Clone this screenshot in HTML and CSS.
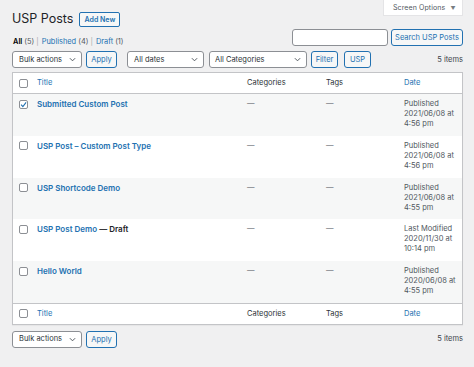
FILE: index.html
```html
<!DOCTYPE html>
<html lang="en">
<head>
  <meta charset="UTF-8">
  <title>USP Posts</title>
  <link rel="stylesheet" href="styles.css">
</head>
<body>

  <div class="wrap">
    <!-- SCREEN OPTIONS TAB -->
    <div class="screen-options">Screen Options <span class="tab-arrow">▼</span></div>

    <!-- PAGE HEADING -->
    <div class="heading">
      <h1>USP Posts</h1>
      <a class="page-action" href="#">Add New</a>
    </div>

    <div class="views-row">
      <ul class="views">
        <li><a class="current" href="#">All</a> <span class="count">(5)</span> |</li>
        <li><a href="#">Published</a> <span class="count">(4)</span> |</li>
        <li><a href="#">Draft</a> <span class="count">(1)</span></li>
      </ul>
      <div class="search-box">
        <input class="search-input" type="search">
        <button class="button">Search USP Posts</button>
      </div>
    </div>

    <!-- TOP TABLENAV -->
    <div class="tablenav">
      <div class="select bulk">Bulk actions <svg class="chevron" viewBox="0 0 8 5"><path d="M1 1l3 3 3-3" /></svg></div>
      <button class="button apply">Apply</button>
      <div class="select dates">All dates <svg class="chevron" viewBox="0 0 8 5"><path d="M1 1l3 3 3-3" /></svg></div>
      <div class="select cats">All Categories <svg class="chevron" viewBox="0 0 8 5"><path d="M1 1l3 3 3-3" /></svg></div>
      <button class="button filter">Filter</button>
      <button class="button usp">USP</button>
      <span class="items">5 items</span>
    </div>

    <!-- POSTS TABLE -->
    <table class="posts">
      <colgroup>
        <col class="col-cb">
        <col class="col-title">
        <col class="col-cats">
        <col class="col-tags">
        <col>
      </colgroup>
      <thead>
        <tr>
          <th class="cb"><span class="checkbox"></span></th>
          <th><a href="#">Title</a></th>
          <th>Categories</th>
          <th>Tags</th>
          <th><a href="#">Date</a></th>
        </tr>
      </thead>
      <tbody>
        <tr class="alt">
          <td class="cb"><span class="checkbox checked"><svg viewBox="0 0 10 10"><path d="M2.3 5.2l2 2.1 3.6-4.6" /></svg></span></td>
          <td><a class="row-title" href="#">Submitted Custom Post</a></td>
          <td class="dash">—</td>
          <td class="dash">—</td>
          <td class="date">Published<br>2021/06/08 at<br>4:56 pm</td>
        </tr>
        <tr>
          <td class="cb"><span class="checkbox"></span></td>
          <td><a class="row-title" href="#">USP Post – Custom Post Type</a></td>
          <td class="dash">—</td>
          <td class="dash">—</td>
          <td class="date">Published<br>2021/06/08 at<br>4:56 pm</td>
        </tr>
        <tr class="alt">
          <td class="cb"><span class="checkbox"></span></td>
          <td><a class="row-title" href="#">USP Shortcode Demo</a></td>
          <td class="dash">—</td>
          <td class="dash">—</td>
          <td class="date">Published<br>2021/06/08 at<br>4:55 pm</td>
        </tr>
        <tr>
          <td class="cb"><span class="checkbox"></span></td>
          <td><a class="row-title" href="#">USP Post Demo</a> <span class="state">— Draft</span></td>
          <td class="dash">—</td>
          <td class="dash">—</td>
          <td class="date">Last Modified<br>2020/11/30 at<br>10:14 pm</td>
        </tr>
        <tr class="alt">
          <td class="cb"><span class="checkbox"></span></td>
          <td><a class="row-title" href="#">Hello World</a></td>
          <td class="dash">—</td>
          <td class="dash">—</td>
          <td class="date">Published<br>2020/06/08 at<br>4:55 pm</td>
        </tr>
      </tbody>
      <tfoot>
        <tr>
          <th class="cb"><span class="checkbox"></span></th>
          <th><a href="#">Title</a></th>
          <th>Categories</th>
          <th>Tags</th>
          <th><a href="#">Date</a></th>
        </tr>
      </tfoot>
    </table>

    <!-- BOTTOM TABLENAV -->
    <div class="tablenav bottom">
      <div class="select bulk">Bulk actions <svg class="chevron" viewBox="0 0 8 5"><path d="M1 1l3 3 3-3" /></svg></div>
      <button class="button apply">Apply</button>
      <span class="items">5 items</span>
    </div>
  </div>

</body>
</html>
```

FILE: styles.css
```css
* {
  box-sizing: border-box;
}

body {
  margin: 0;
  background: #f0f0f1;
  color: #3c434a;
  font-family: Inter, "Noto Sans", sans-serif;
  font-size: 7.5px;
  line-height: 10px;
}

a {
  color: #2271b1;
  text-decoration: none;
}

.wrap {
  padding: 0 11px 0 12px;
}

/* SCREEN OPTIONS */
.screen-options {
  float: right;
  width: 80px;
  height: 16px;
  background: #fff;
  border: 1px solid #e4e4e6;
  border-top: none;
  color: #50575e;
  font-size: 7px;
  line-height: 15px;
  padding-left: 9px;
  letter-spacing: 0.1px;
}

.tab-arrow {
  font-size: 5px;
  margin-left: 3px;
  color: #787c82;
}

/* HEADING */
.heading {
  display: flex;
  align-items: center;
  padding-top: 11px;
  gap: 6px;
}

h1 {
  margin: 0;
  font-size: 12.5px;
  font-weight: 400;
  line-height: 16px;
  color: #1d2327;
}

.page-action {
  display: inline-block;
  width: 41px;
  height: 15px;
  border: 1px solid #2271b1;
  border-radius: 2px;
  background: #f6f7f7;
  font-size: 7px;
  font-weight: 600;
  line-height: 13px;
  text-align: center;
}

.views-row {
  display: flex;
  justify-content: space-between;
  align-items: flex-end;
  margin-top: 2px;
}

.views {
  list-style: none;
  margin: 0 0 0 1px;
  padding: 0;
  display: flex;
  gap: 3px;
  font-size: 7.4px;
  line-height: 9px;
  color: #a7aaad;
}

.views .current {
  color: #000;
  font-weight: 600;
}

.views .count {
  color: #50575e;
}

.search-box {
  display: flex;
  gap: 3px;
}

.search-input {
  width: 96px;
  height: 17px;
  margin: 0;
  border: 1px solid #8c8f94;
  border-radius: 3px;
  background: #fff;
}

/* BUTTONS AND SELECTS */
.button {
  height: 17px;
  margin: 0;
  padding: 0 5px;
  border: 1px solid #2271b1;
  border-radius: 3px;
  background: #f6f7f7;
  color: #2271b1;
  font-family: inherit;
  font-size: 7.5px;
  line-height: 15px;
}

.search-box .button {
  width: 72px;
  padding: 0;
}

.tablenav {
  display: flex;
  align-items: center;
  height: 17px;
  margin-top: 5px;
}

.select {
  display: flex;
  align-items: center;
  justify-content: space-between;
  height: 17px;
  padding: 0 5px 0 6px;
  border: 1px solid #8c8f94;
  border-radius: 3px;
  background: #fff;
  color: #2c3338;
}

.chevron {
  width: 7px;
  height: 5px;
  fill: none;
  stroke: #50575e;
  stroke-width: 1.1;
}

.bulk {
  width: 70px;
  margin-right: 4px;
}

.apply {
  width: 31px;
  padding: 0;
}

.dates {
  width: 77px;
  margin-left: 10px;
  margin-right: 5px;
}

.cats {
  width: 98px;
  padding-left: 5px;
  margin-right: 4px;
}

.filter {
  width: 27px;
  padding: 0;
  margin-right: 6px;
}

.usp {
  width: 27px;
  padding: 0;
}

.items {
  margin-left: auto;
  color: #3c434a;
}

/* TABLE */
.posts {
  width: 100%;
  margin-top: 4px;
  table-layout: fixed;
  border-collapse: separate;
  border-spacing: 0;
  border: 1px solid #c3c4c7;
  background: #fff;
  box-shadow: 0 1px 1px rgba(0, 0, 0, 0.04);
}

.col-cb {
  width: 18px;
}

.col-title {
  width: 210px;
}

.col-cats {
  width: 79px;
}

.col-tags {
  width: 78px;
}

th {
  text-align: left;
  font-weight: 400;
  color: #2c3338;
  padding: 5px 6px;
  height: 20px;
}

thead th {
  border-bottom: 1px solid #c3c4c7;
}

tfoot th {
  border-top: 1px solid #c3c4c7;
}

td {
  vertical-align: top;
  padding: 5px 6px 6.8px;
  color: #50575e;
}

tr.alt td {
  background: #f6f7f7;
}

.cb {
  padding: 5px 0 0 6px;
}

th.cb {
  padding-top: 0;
  vertical-align: middle;
}

.checkbox {
  display: block;
  width: 9px;
  height: 9px;
  border: 1px solid #8c8f94;
  border-radius: 2px;
  background: #fff;
}

.checkbox svg {
  display: block;
  width: 9px;
  height: 9px;
  margin: -1px 0 0 -1px;
  fill: none;
  stroke: #2271b1;
  stroke-width: 1.2;
}

td.cb .checkbox {
  margin-top: 0.5px;
}

.row-title {
  font-size: 8px;
  font-weight: 600;
}

.state {
  color: #1d2327;
  font-size: 8px;
  font-weight: 600;
}

.dash {
  color: #646970;
}

.date {
  white-space: nowrap;
}

.bottom {
  margin-top: 6px;
}
```
